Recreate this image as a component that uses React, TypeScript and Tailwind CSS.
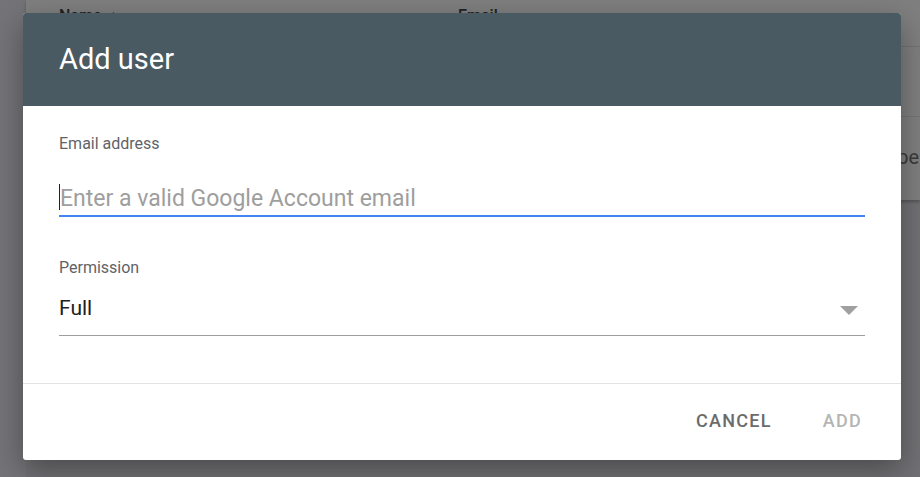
import React from "react";

export default function App() {
  return (
    <div
      className="relative w-[920px] h-[477px] overflow-hidden bg-[#717175]"
      style={{ fontFamily: "Roboto, 'Liberation Sans', sans-serif" }}
    >
      {/* background page */}
      <div className="flex h-full">
        <div className="w-[26px] bg-[#747478]" />
        <div className="flex-1 flex flex-col">
          <div className="h-[200px] bg-[#7f7f7f] flex flex-col shadow-[0_2px_3px_rgba(0,0,0,0.25)]">
            <div className="h-[47px] border-b border-[#747474] flex items-start pt-[4px] pl-[33px] text-[16px] font-medium text-[#222]">
              <span className="w-[399px]">Name ▲</span>
              <span>Email</span>
            </div>
            <div className="h-[70px] border-b border-[#747474]" />
            <div className="flex-1 flex items-center justify-end text-[20px] text-[#3a3a3a] pb-[4px]">
              <span className="pr-[1px]">pe</span>
            </div>
          </div>
          <div className="flex-1" />
        </div>
      </div>

      {/* dialog */}
      <div className="absolute left-[23px] top-[13px] w-[878px] h-[447px] bg-white rounded-[3px] overflow-hidden flex flex-col shadow-[0_10px_30px_rgba(0,0,0,0.35)]">
        <div className="h-[93px] bg-[#4a5a63] flex items-center pl-[36px]">
          <h1 className="text-[29px] text-white font-normal leading-none">Add user</h1>
        </div>
        <div className="flex-1 flex flex-col px-[36px] pt-[30px]">
          <label className="text-[16px] text-[#5f6368] leading-none">Email address</label>
          <div className="mt-[26px] h-[39px] border-b-2 border-[#4285f4] flex items-start pt-[6px]">
            <span className="w-px h-[26px] bg-[#202124]" />
            <span className="text-[23px] text-[#9e9e9e] leading-none pt-[3px]">
              Enter a valid Google Account email
            </span>
          </div>
          <label className="mt-[43px] text-[16px] text-[#5f6368] leading-none">Permission</label>
          <div className="mt-[22px] h-[38px] border-b border-[#9e9e9e] flex items-start justify-between">
            <span className="text-[21px] text-[#212121] leading-none">Full</span>
            <svg width="18" height="9" viewBox="0 0 18 9" className="mt-[8px] mr-[7px]">
              <path d="M0 0 L18 0 L9 9 Z" fill="#a0a0a0" />
            </svg>
          </div>
        </div>
        <div className="h-[77px] border-t border-[#e3e3e3] flex items-center justify-end pr-[39px] gap-[51px] pb-[3px]">
          <span className="text-[18px] font-medium tracking-[0.07em] text-[#6b6b6b]">CANCEL</span>
          <span className="text-[18px] font-medium tracking-[0.07em] text-[#b5b5b5]">ADD</span>
        </div>
      </div>
    </div>
  );
}
